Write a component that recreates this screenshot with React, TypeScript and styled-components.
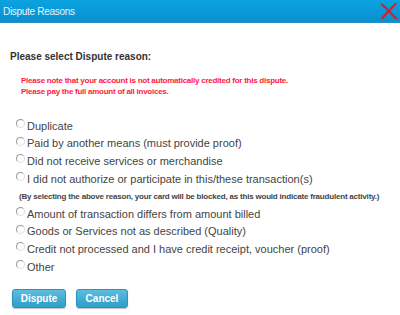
import styled, { createGlobalStyle } from "styled-components";

const GlobalStyle = createGlobalStyle`
  html, body {
    margin: 0;
    padding: 0;
    background: #fff;
  }
  body {
    font-family: "Liberation Sans", Arial, sans-serif;
  }
`;

const Dialog = styled.div`
  width: 400px;
  height: 315px;
  display: flex;
  flex-direction: column;
  background: #fff;
  overflow: hidden;
`;

const TitleBar = styled.div`
  height: 22px;
  display: flex;
  align-items: center;
  justify-content: space-between;
  padding: 0 2px 0 3px;
  background: linear-gradient(#0aa3e0, #0a8fcf);
  border-bottom: 1px solid #2a8cc4;
`;

const Title = styled.span`
  color: #e8f4fb;
  font-size: 10px;
  letter-spacing: -0.3px;
`;

const CloseButton = styled.button`
  border: 0;
  background: none;
  padding: 0;
  width: 18px;
  height: 18px;
  display: flex;
  cursor: pointer;
`;

const Body = styled.div`
  display: flex;
  flex-direction: column;
  padding: 28px 10px 0 10px;
`;

const Heading = styled.h3`
  margin: 0;
  font-size: 10px;
  font-weight: bold;
  color: #333;
`;

const Warning = styled.div`
  margin: 13px 0 0 11px;
  color: #ff1a3c;
  font-size: 8px;
  letter-spacing: -0.25px;
  font-weight: bold;
  line-height: 11px;
`;

const ReasonList = styled.div`
  display: flex;
  flex-direction: column;
  margin-top: 20px;
  padding-left: 6px;
`;

const Reason = styled.label`
  display: flex;
  align-items: center;
  height: 17.6px;
  gap: 2px;
  font-size: 11px;
  color: #444;
  cursor: pointer;
`;

const Radio = styled.input.attrs({ type: "radio" })`
  appearance: none;
  margin: 0;
  width: 9px;
  height: 9px;
  border-radius: 50%;
  border: 1px solid #9a9a9a;
  border-right-color: #dcdcdc;
  border-bottom-color: #e4e4e4;
  background: #fff;
  box-sizing: border-box;
  position: relative;
  top: -2px;
  &:checked {
    background: radial-gradient(circle, #333 0 2px, #fff 2.5px);
  }
`;

const Note = styled.div`
  height: 17.6px;
  display: flex;
  align-items: center;
  padding-left: 3px;
  font-size: 8px;
  letter-spacing: -0.2px;
  font-weight: bold;
  color: #444;
  white-space: nowrap;
`;

const Actions = styled.div`
  display: flex;
  gap: 10px;
  margin-top: 14px;
  padding-left: 2px;
`;

const ActionButton = styled.button<{ $w: number }>`
  width: ${(p) => p.$w}px;
  height: 19px;
  padding: 0;
  border: 1px solid #2b93bb;
  border-radius: 3px;
  background: linear-gradient(#5cbde0, #2f9ec6);
  box-shadow: 0 1px 1px rgba(0, 0, 0, 0.25);
  color: #fff;
  font-family: "Liberation Sans", Arial, sans-serif;
  font-size: 10px;
  font-weight: bold;
  cursor: pointer;
`;

const reasonsTop = [
  "Duplicate",
  "Paid by another means (must provide proof)",
  "Did not receive services or merchandise",
  "I did not authorize or participate in this/these transaction(s)",
];

const reasonsBottom = [
  "Amount of transaction differs from amount billed",
  "Goods or Services not as described (Quality)",
  "Credit not processed and I have credit receipt, voucher (proof)",
  "Other",
];

const CloseIcon = () => (
  <svg width="18" height="18" viewBox="0 0 18 18">
    <path d="M2 2.5 C6 6 10 10 16 16.5" stroke="#d4202a" strokeWidth="2.2" fill="none" strokeLinecap="round" />
    <path d="M15.5 2 C11 6.5 7 10.5 2.5 16" stroke="#d4202a" strokeWidth="2.2" fill="none" strokeLinecap="round" />
  </svg>
);

export default function App() {
  return (
    <>
      <GlobalStyle />
      <Dialog>
        <TitleBar>
          <Title>Dispute Reasons</Title>
          <CloseButton aria-label="Close">
            <CloseIcon />
          </CloseButton>
        </TitleBar>
        <Body>
          <Heading>Please select Dispute reason:</Heading>
          <Warning>
            Please note that your account is not automatically credited for this dispute.
            <br />
            Please pay the full amount of all invoices.
          </Warning>
          <ReasonList>
            {reasonsTop.map((r) => (
              <Reason key={r}>
                <Radio name="reason" value={r} />
                {r}
              </Reason>
            ))}
            <Note>
              (By selecting the above reason, your card will be blocked, as this would indicate fraudulent activity.)
            </Note>
            {reasonsBottom.map((r) => (
              <Reason key={r}>
                <Radio name="reason" value={r} />
                {r}
              </Reason>
            ))}
          </ReasonList>
          <Actions>
            <ActionButton $w={54}>Dispute</ActionButton>
            <ActionButton $w={52}>Cancel</ActionButton>
          </Actions>
        </Body>
      </Dialog>
    </>
  );
}
